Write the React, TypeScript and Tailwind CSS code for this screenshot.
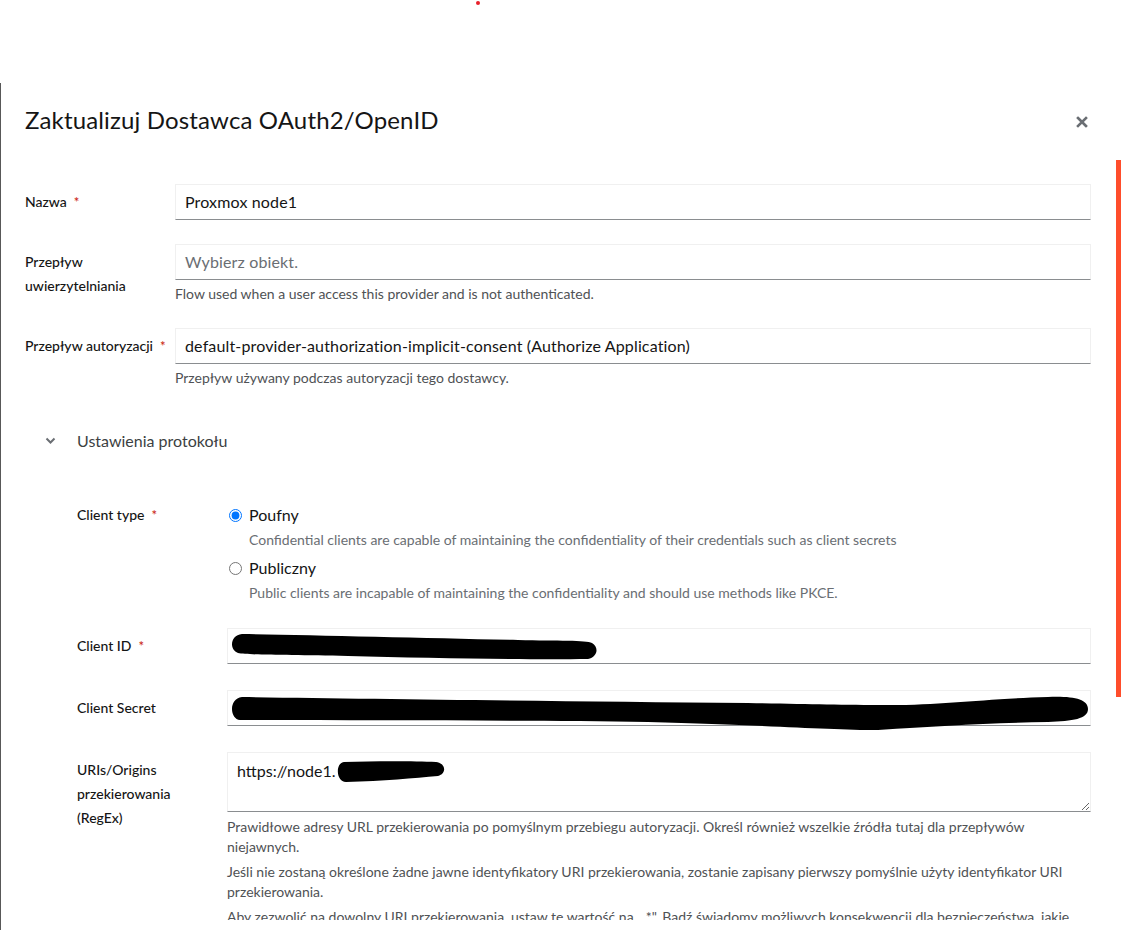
import React from "react";

const FONT = { fontFamily: "Lato, 'Noto Sans', 'Liberation Sans', sans-serif" };

function Req() {
  return <span className="ml-[7px] text-[13px] text-[#c9190b]">*</span>;
}

function Field({ children, placeholder }: { children?: React.ReactNode; placeholder?: boolean }) {
  return (
    <div
      className={`relative h-[36px] border border-[#f0f0f0] border-b-[#8a8d90] px-[9px] flex items-center text-[16px] tracking-[0.15px] ${
        placeholder ? "text-[#6a6e73]" : "text-[#151515]"
      }`}
    >
      {children}
    </div>
  );
}

export default function App() {
  return (
    <div className="relative w-[1121px] h-[930px] bg-white overflow-hidden flex flex-col" style={FONT}>
      {/* top blank area */}
      <div className="relative h-[83px] shrink-0">
        <div className="absolute left-[476px] top-[1px] w-[4px] h-[4px] rounded-full bg-[#e8202a]" />
      </div>

      {/* modal */}
      <div className="relative flex-1 flex flex-col border-l border-[#585858] pb-[10px] min-h-0">
        {/* scrollbar thumb */}
        <div className="absolute right-0 top-[77px] w-[5px] h-[537px] bg-[#ff4d2b]" />

        {/* header */}
        <div className="flex items-start justify-between pl-[24px] pr-[33px] pt-[21px] shrink-0">
          <h1 className="text-[24px] leading-[32px] text-[#151515] font-normal tracking-[0.15px]">
            Zaktualizuj Dostawca OAuth2/OpenID
          </h1>
          <svg className="mt-[12px]" width="12" height="12" viewBox="0 0 12 12">
            <path d="M2 2 L10 10 M10 2 L2 10" stroke="#6a6e73" strokeWidth="2.6" strokeLinecap="square" />
          </svg>
        </div>

        {/* body */}
        <div className="flex-1 min-h-0 overflow-hidden pl-[24px] pr-[30px] pt-[48px]">
          <div className="flex flex-col gap-[24px]">
            {/* Nazwa */}
            <div className="flex">
              <div className="w-[150px] shrink-0 pt-[6px] leading-[24px] text-[14px] font-medium text-[#151515]">
                Nazwa<Req />
              </div>
              <div className="flex-1">
                <Field>Proxmox node1</Field>
              </div>
            </div>

            {/* Przepływ uwierzytelniania */}
            <div className="flex">
              <div className="w-[150px] shrink-0 pt-[6px] leading-[24px] text-[14px] font-medium text-[#151515]">
                Przepływ
                <br />
                uwierzytelniania
              </div>
              <div className="flex-1">
                <Field placeholder>Wybierz obiekt.</Field>
                <div className="mt-[4px] text-[14px] leading-[20px] text-[#4f5255]">
                  Flow used when a user access this provider and is not authenticated.
                </div>
              </div>
            </div>

            {/* Przepływ autoryzacji */}
            <div className="flex">
              <div className="w-[150px] shrink-0 pt-[6px] leading-[24px] text-[14px] font-medium text-[#151515] whitespace-nowrap">
                Przepływ autoryzacji<Req />
              </div>
              <div className="flex-1">
                <Field>default-provider-authorization-implicit-consent (Authorize Application)</Field>
                <div className="mt-[4px] text-[14px] leading-[20px] text-[#4f5255]">
                  Przepływ używany podczas autoryzacji tego dostawcy.
                </div>
              </div>
            </div>
          </div>

          {/* expandable section */}
          <div className="mt-[41px] flex items-center h-[24px]">
            <svg className="ml-[20px]" width="11" height="8" viewBox="0 0 11 8">
              <path d="M1.5 1.5 L5.5 5.5 L9.5 1.5" fill="none" stroke="#6a6e73" strokeWidth="2" />
            </svg>
            <span className="ml-[21px] text-[16px] leading-[24px] text-[#3c3f42]">Ustawienia protokołu</span>
          </div>

          <div className="ml-[52px] mt-[50px] flex flex-col gap-[25px]">
            {/* Client type */}
            <div className="flex">
              <div className="w-[150px] shrink-0 leading-[24px] text-[14px] font-medium text-[#151515]">
                Client type<Req />
              </div>
              <div className="flex-1">
                <label className="flex items-center h-[24px] gap-[7px]">
                  <input type="radio" name="ct" defaultChecked className="m-0 ml-[2px] w-[13px] h-[13px]" />
                  <span className="text-[16px] text-[#151515]">Poufny</span>
                </label>
                <div className="mt-[3px] pl-[22px] text-[14px] leading-[20px] text-[#6a6e73]">
                  Confidential clients are capable of maintaining the confidentiality of their credentials such as client secrets
                </div>
                <label className="mt-[6px] flex items-center h-[24px] gap-[7px]">
                  <input type="radio" name="ct" className="m-0 ml-[2px] w-[13px] h-[13px]" />
                  <span className="text-[16px] text-[#151515]">Publiczny</span>
                </label>
                <div className="mt-[3px] pl-[22px] text-[14px] leading-[20px] text-[#6a6e73]">
                  Public clients are incapable of maintaining the confidentiality and should use methods like PKCE.
                </div>
              </div>
            </div>

            {/* Client ID */}
            <div className="flex">
              <div className="w-[150px] shrink-0 pt-[6px] leading-[24px] text-[14px] font-medium text-[#151515]">
                Client ID<Req />
              </div>
              <div className="flex-1">
                <Field>
                  <svg className="absolute left-0 top-0" width="380" height="36" viewBox="0 0 380 36">
                    <path
                      d="M14 5 C 80 6, 200 9, 290 11 C 330 12, 358 11, 364 14 C 371 18, 370 28, 360 30 C 300 31, 200 29, 120 27 C 60 26, 20 26, 10 24 C 1 21, 2 6, 14 5 Z"
                      fill="#000"
                    />
                  </svg>
                </Field>
              </div>
            </div>

            {/* Client Secret */}
            <div className="flex mt-[1px]">
              <div className="w-[150px] shrink-0 pt-[6px] leading-[24px] text-[14px] font-medium text-[#151515]">
                Client Secret
              </div>
              <div className="flex-1">
                <Field>
                  <svg className="absolute left-0 top-0" width="864" height="42" viewBox="0 0 864 42">
                    <path
                      d="M14 6 C 150 8, 330 10, 520 12 C 580 13, 610 14, 660 14 C 720 14, 750 8, 820 6 C 845 5, 860 8, 860 18 C 860 28, 845 30, 820 31 C 760 32, 710 35, 650 39 C 600 39, 540 34, 420 31 C 300 29, 150 30, 12 29 C 2 28, 0 8, 14 6 Z"
                      fill="#000"
                    />
                  </svg>
                </Field>
              </div>
            </div>

            {/* URIs */}
            <div className="flex mt-[1px]">
              <div className="w-[150px] shrink-0 pt-[6px] leading-[24px] text-[14px] font-medium text-[#151515]">
                URIs/Origins
                <br />
                przekierowania
                <br />
                (RegEx)
              </div>
              <div className="flex-1 min-w-0">
                <div className="relative">
                  <textarea
                    readOnly
                    defaultValue="https://node1."
                    className="block w-full h-[60px] border border-[#f0f0f0] border-b-[#8a8d90] px-[9px] pt-[6px] text-[16px] leading-[24px] text-[#151515] resize-y outline-none"
                    style={FONT}
                  />
                  <svg className="absolute left-[107px] top-[7px]" width="114" height="26" viewBox="0 0 114 26">
                    <path
                      d="M10 3 C 40 2, 80 2, 102 3 C 112 4, 113 15, 104 17 C 80 19, 50 22, 12 23 C 2 23, 1 4, 10 3 Z"
                      fill="#000"
                    />
                  </svg>
                </div>
                <div className="mt-[5px] text-[14px] leading-[20px] text-[#4f5255] whitespace-nowrap">
                  <div>
                    Prawidłowe adresy URL przekierowania po pomyślnym przebiegu autoryzacji. Określ również wszelkie źródła tutaj dla przepływów
                  </div>
                  <div>niejawnych.</div>
                  <div className="mt-[5px]">
                    Jeśli nie zostaną określone żadne jawne identyfikatory URI przekierowania, zostanie zapisany pierwszy pomyślnie użyty identyfikator URI
                  </div>
                  <div>przekierowania.</div>
                  <div className="mt-[5px]">
                    Aby zezwolić na dowolny URI przekierowania, ustaw tę wartość na „.*". Bądź świadomy możliwych konsekwencji dla bezpieczeństwa, jakie
                  </div>
                  <div>to może mieć.</div>
                </div>
              </div>
            </div>
          </div>
        </div>
      </div>
    </div>
  );
}
